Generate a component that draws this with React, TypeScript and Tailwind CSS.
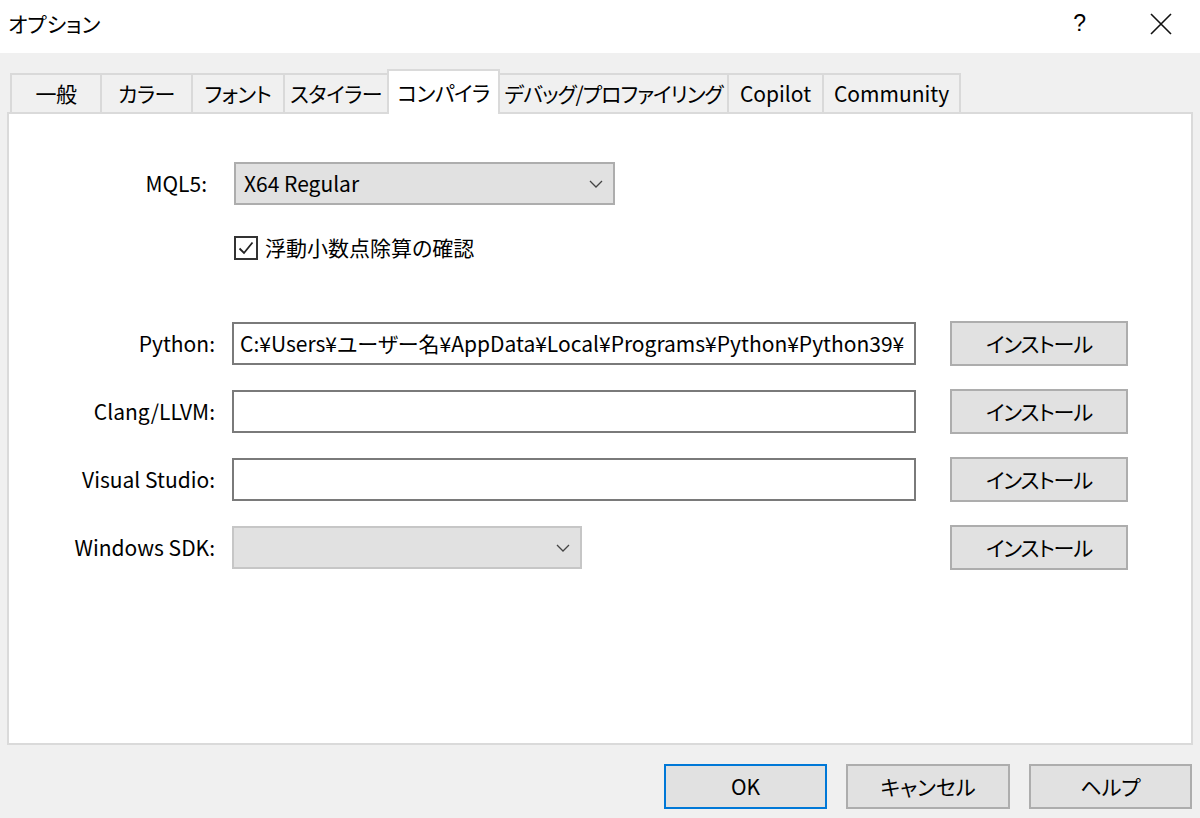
import type { ReactNode } from 'react'

const font = "font-['Noto_Sans_CJK_JP','Noto_Sans',sans-serif] [font-feature-settings:'palt']"

const tabs = ['一般', 'カラー', 'フォント', 'スタイラー', 'コンパイラ', 'デバッグ/プロファイリング', 'Copilot', 'Community']
const tabWidths = ['w-[92px]', 'w-[93px]', 'w-[94px]', 'w-[106px]', 'w-[113px]', 'w-[231px]', 'w-[97px]', 'w-[139px]']

function Chevron() {
  return (
    <svg width="14" height="8" viewBox="0 0 14 8" fill="none" className="shrink-0">
      <path d="M1 1l6 6 6-6" stroke="#444" strokeWidth="1.3" />
    </svg>
  )
}

function Field({ label, children }: { label: string; children: ReactNode }) {
  return (
    <div className="flex items-center h-[45px]">
      <div className="w-[207px] text-right text-[21px] text-black pr-px">{label}</div>
      <div className="ml-[16px] w-[718px] flex items-center">{children}</div>
      <button className="w-[178px] h-[45px] bg-[#e1e1e1] border-2 border-[#adadad] text-[21px] tracking-[-1px] text-black">
        インストール
      </button>
    </div>
  )
}

function TextBox({ value }: { value?: string }) {
  return (
    <div className="w-[684px] h-[43px] border-2 border-[#7a7a7a] bg-white flex items-center px-[6px] text-[21px] text-black whitespace-nowrap overflow-hidden">
      {value}
    </div>
  )
}

export default function App() {
  return (
    <div className={`w-[1200px] h-[818px] bg-[#f0f0f0] flex flex-col ${font}`}>
      {/* title bar */}
      <div className="h-[53px] bg-white flex items-center justify-between pl-[8px] pr-[28px]">
        <p className="text-[21px] text-black -mt-[6px]">オプション</p>
        <div className="flex items-center gap-[64px] -mt-[6px]">
          <span className="text-[23px] text-black font-['Liberation_Sans',sans-serif]">?</span>
          <svg width="22" height="22" viewBox="0 0 22 22" fill="none">
            <path d="M1 1l20 20M21 1L1 21" stroke="#111" strokeWidth="1.6" />
          </svg>
        </div>
      </div>

      <div className="flex-1 px-[7px] pt-[16px]">
        {/* tabs */}
        <div className="flex items-end h-[43px] pl-[3px]">
          {tabs.map((t, i) =>
            i === 4 ? (
              <div
                key={t}
                className={`${tabWidths[i]} h-[45px] -mb-[2px] -ml-[2px] relative z-10 bg-white border-2 border-b-0 border-[#dadada] flex items-center justify-center text-[21px] tracking-[-0.5px] text-black`}
              >
                {t}
              </div>
            ) : (
              <div
                key={t}
                className={`${tabWidths[i]} h-[39px] bg-[#f0f0f0] border-2 border-b-0 border-[#d9d9d9] -ml-[2px] first:ml-0 flex items-center justify-center text-[21px] ${i === 5 ? 'tracking-[-1px]' : i < 4 ? 'tracking-[-0.5px]' : ''} text-black whitespace-nowrap`}
              >
                {t}
              </div>
            )
          )}
        </div>

        {/* panel */}
        <div className="h-[633px] bg-white border-2 border-[#dadada] pt-[48px]">
          <div className="flex items-center h-[43px]">
            <div className="w-[198px] text-right text-[21px] text-black">MQL5:</div>
            <div className="ml-[27px] w-[381px] h-[43px] bg-[#e1e1e1] border-2 border-[#adadad] flex items-center justify-between pl-[8px] pr-[10px] text-[21px] text-black">
              <span>X64 Regular</span>
              <Chevron />
            </div>
          </div>

          <div className="flex items-center mt-[31px] ml-[225px] h-[24px]">
            <div className="w-[24px] h-[24px] border-2 border-[#333] bg-white flex items-center justify-center">
              <svg width="16" height="14" viewBox="0 0 16 14" fill="none">
                <path d="M1.5 7.5l4.5 4.5L14.5 1.5" stroke="#222" strokeWidth="1.8" />
              </svg>
            </div>
            <span className="ml-[7px] text-[21px] text-black">浮動小数点除算の確認</span>
          </div>

          <div className="mt-[61px] flex flex-col gap-[23px]">
            <Field label="Python:">
              <TextBox value="C:¥Users¥ユーザー名¥AppData¥Local¥Programs¥Python¥Python39¥" />
            </Field>
            <Field label="Clang/LLVM:">
              <TextBox />
            </Field>
            <Field label="Visual Studio:">
              <TextBox />
            </Field>
            <Field label="Windows SDK:">
              <div className="w-[350px] h-[43px] bg-[#e1e1e1] border-2 border-[#c6c6c6] flex items-center justify-end pr-[10px]">
                <Chevron />
              </div>
            </Field>
          </div>
        </div>

        {/* dialog buttons */}
        <div className="flex justify-end gap-[19px] mt-[19px] pr-[1px]">
          <button className="w-[163px] h-[45px] bg-[#e1e1e1] border-2 border-[#0078d7] text-[21px] text-black">OK</button>
          <button className="w-[164px] h-[45px] bg-[#e1e1e1] border-2 border-[#adadad] text-[21px] text-black">キャンセル</button>
          <button className="w-[163px] h-[45px] bg-[#e1e1e1] border-2 border-[#adadad] text-[21px] text-black">ヘルプ</button>
        </div>
      </div>
    </div>
  )
}
